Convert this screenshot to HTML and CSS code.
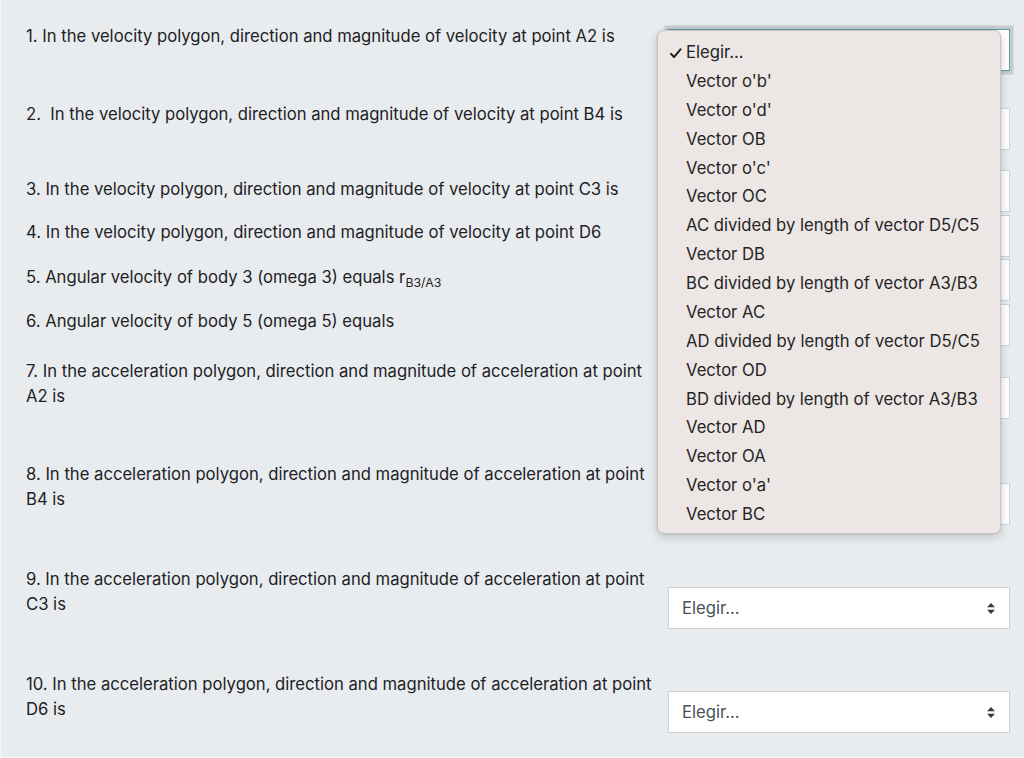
FILE: index.html
```html
<!DOCTYPE html>
<html>
<head>
<meta charset="utf-8">
<link rel="stylesheet" href="styles.css">
</head>
<body>
<div class="page">
  <div class="q r1">
    <div class="qt">1. In the velocity polygon, direction and magnitude of velocity at point A2 is</div>
    <div class="sel focus"><span>Elegir...</span><svg class="arr" viewBox="0 0 8 11"><polygon points="4,0 8,4.3 0,4.3"/><polygon points="0,6.7 8,6.7 4,11"/></svg></div>
  </div>
  <div class="q r2">
    <div class="qt">2.&nbsp; In the velocity polygon, direction and magnitude of velocity at point B4 is</div>
    <div class="sel"><span>Elegir...</span><svg class="arr" viewBox="0 0 8 11"><polygon points="4,0 8,4.3 0,4.3"/><polygon points="0,6.7 8,6.7 4,11"/></svg></div>
  </div>
  <div class="q r3">
    <div class="qt">3. In the velocity polygon, direction and magnitude of velocity at point C3 is</div>
    <div class="sel"><span>Elegir...</span><svg class="arr" viewBox="0 0 8 11"><polygon points="4,0 8,4.3 0,4.3"/><polygon points="0,6.7 8,6.7 4,11"/></svg></div>
  </div>
  <div class="q r4">
    <div class="qt">4. In the velocity polygon, direction and magnitude of velocity at point D6</div>
    <div class="sel"><span>Elegir...</span><svg class="arr" viewBox="0 0 8 11"><polygon points="4,0 8,4.3 0,4.3"/><polygon points="0,6.7 8,6.7 4,11"/></svg></div>
  </div>
  <div class="q r5">
    <div class="qt">5. Angular velocity of body 3 (omega 3) equals r<sub>B3/A3</sub></div>
    <div class="sel"><span>Elegir...</span><svg class="arr" viewBox="0 0 8 11"><polygon points="4,0 8,4.3 0,4.3"/><polygon points="0,6.7 8,6.7 4,11"/></svg></div>
  </div>
  <div class="q r6">
    <div class="qt">6. Angular velocity of body 5 (omega 5) equals</div>
    <div class="sel"><span>Elegir...</span><svg class="arr" viewBox="0 0 8 11"><polygon points="4,0 8,4.3 0,4.3"/><polygon points="0,6.7 8,6.7 4,11"/></svg></div>
  </div>
  <div class="q r7">
    <div class="qt">7. In the acceleration polygon, direction and magnitude of acceleration at point<br>A2 is</div>
    <div class="sel"><span>Elegir...</span><svg class="arr" viewBox="0 0 8 11"><polygon points="4,0 8,4.3 0,4.3"/><polygon points="0,6.7 8,6.7 4,11"/></svg></div>
  </div>
  <div class="q r8">
    <div class="qt">8. In the acceleration polygon, direction and magnitude of acceleration at point<br>B4 is</div>
    <div class="sel"><span>Elegir...</span><svg class="arr" viewBox="0 0 8 11"><polygon points="4,0 8,4.3 0,4.3"/><polygon points="0,6.7 8,6.7 4,11"/></svg></div>
  </div>
  <div class="q r9">
    <div class="qt">9. In the acceleration polygon, direction and magnitude of acceleration at point<br>C3 is</div>
    <div class="sel"><span>Elegir...</span><svg class="arr" viewBox="0 0 8 11"><polygon points="4,0 8,4.3 0,4.3"/><polygon points="0,6.7 8,6.7 4,11"/></svg></div>
  </div>
  <div class="q r10">
    <div class="qt">10. In the acceleration polygon, direction and magnitude of acceleration at point<br>D6 is</div>
    <div class="sel"><span>Elegir...</span><svg class="arr" viewBox="0 0 8 11"><polygon points="4,0 8,4.3 0,4.3"/><polygon points="0,6.7 8,6.7 4,11"/></svg></div>
  </div>

  <ul class="popup">
    <li class="checked"><svg class="chk" viewBox="0 0 11 10"><path d="M1 5.6 L3.9 8.6 L10 1.2"/></svg>Elegir...</li>
    <li>Vector o'b'</li>
    <li>Vector o'd'</li>
    <li>Vector OB</li>
    <li>Vector o'c'</li>
    <li>Vector OC</li>
    <li>AC divided by length of vector D5/C5</li>
    <li>Vector DB</li>
    <li>BC divided by length of vector A3/B3</li>
    <li>Vector AC</li>
    <li>AD divided by length of vector D5/C5</li>
    <li>Vector OD</li>
    <li>BD divided by length of vector A3/B3</li>
    <li>Vector AD</li>
    <li>Vector OA</li>
    <li>Vector o'a'</li>
    <li>Vector BC</li>
  </ul>
</div>
</body>
</html>
```

FILE: styles.css
```css
html, body {
  margin: 0;
  padding: 0;
}
body {
  background: #f4f5f6;
  font-family: Inter, "Liberation Sans", sans-serif;
  color: #1d2125;
}
.page {
  position: relative;
  margin: 0 0 1px 1px;
  height: 757px;
  box-sizing: border-box;
  background: #e9ecee;
  padding: 22px 0 0 25px;
  overflow: hidden;
}
.q {
  display: flex;
  align-items: flex-start;
  gap: 12px;
}
.qt {
  width: 630px;
  padding-top: 2px;
  font-size: 16.65px;
  line-height: 25px;
  white-space: nowrap;
}
.qt sub {
  font-size: 12.3px;
  vertical-align: -4px;
  line-height: 0;
}
.sel {
  position: relative;
  width: 342px;
  height: 42px;
  box-sizing: border-box;
  background: #fff;
  border: 1px solid #ced4da;
  display: flex;
  align-items: center;
  padding: 0 14px 0 13px;
  font-size: 16.65px;
  color: #495057;
}
.sel span { flex: 1; }
.sel .arr {
  width: 8px;
  height: 11px;
  fill: #343a40;
}
.sel.focus {
  border-color: #5e9fa8;
  box-shadow: 0 0 0 3.5px #c5cbce;
}
.r1 { height: 78px; }
.r1 .sel { margin-top: 7px; }
.r2 { height: 70px; }
.r2 .sel { margin-top: 8px; }
.r3 { height: 45px; }
.r3 .qt { padding-top: 7px; }
.r4 { height: 44px; }
.r4 .qt { padding-top: 5px; }
.r5 { height: 45px; }
.r5 .qt { padding-top: 6px; }
.r6 { height: 53px; }
.r6 .qt { padding-top: 5px; }
.r7 { height: 103px; }
.r7 .sel { margin-top: 20px; }
.r8 { height: 105px; }
.r8 .sel { margin-top: 23px; }
.r9 { height: 105px; }
.r9 .sel { margin-top: 22px; }
.r10 .sel { margin-top: 21px; }

.popup {
  position: absolute;
  left: 656px;
  top: 30px;
  width: 344px;
  margin: 0;
  padding: 7px 0 4px;
  box-sizing: border-box;
  list-style: none;
  background: #ece7e5;
  border: 1px solid #c9c5c3;
  border-radius: 7px;
  box-shadow: 0 3px 10px rgba(0,0,0,0.18), 0 0 2px rgba(0,0,0,0.12);
  font-size: 16.65px;
  color: #242424;
}
.popup li {
  position: relative;
  line-height: 28.875px;
  height: 28.875px;
  padding-left: 28px;
  white-space: nowrap;
}
.popup .chk {
  position: absolute;
  left: 12px;
  top: 9.5px;
  width: 11.5px;
  height: 10.5px;
  fill: none;
  stroke: #1e1e1e;
  stroke-width: 1.9;
  stroke-linecap: round;
  stroke-linejoin: round;
}
```
